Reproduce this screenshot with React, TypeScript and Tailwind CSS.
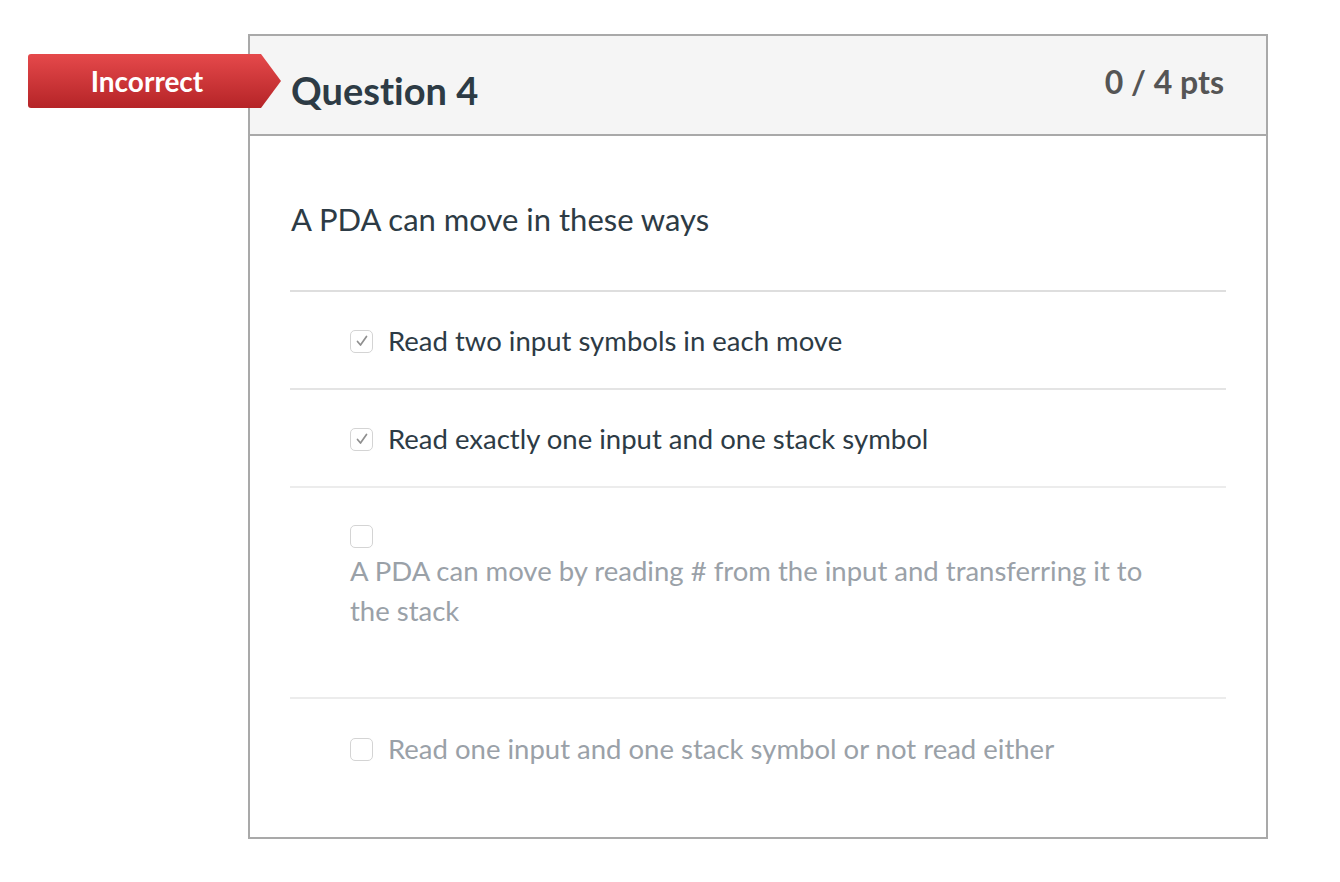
import React from "react";

function Check({ checked }: { checked: boolean }) {
  return (
    <span className="flex h-[23px] w-[23px] shrink-0 items-center justify-center rounded-[5px] border border-[#d4d4d4] bg-white">
      {checked && (
        <svg width="14" height="14" viewBox="0 0 14 14" fill="none">
          <path d="M2.5 7.5 L5.5 11 L11.5 2.5" stroke="#8f8f8f" strokeWidth="1.7" strokeLinecap="round" strokeLinejoin="round" />
        </svg>
      )}
    </span>
  );
}

export default function App() {
  const font = { fontFamily: "Lato, 'Open Sans', sans-serif" };
  return (
    <div className="relative min-h-[882px] w-[1340px] bg-white pl-[248px] pt-[34px] [font-variant-ligatures:none]" style={font}>
      {/* Incorrect banner */}
      <div className="absolute left-[28px] top-[54px] h-[54px] w-[253px]">
        <svg className="absolute inset-0" width="253" height="54" viewBox="0 0 253 54">
          <defs>
            <linearGradient id="rg" x1="0" y1="0" x2="0" y2="1">
              <stop offset="0" stopColor="#e5494b" />
              <stop offset="1" stopColor="#b52427" />
            </linearGradient>
          </defs>
          <path d="M3 0 H233 L253 27 L233 54 H3 Q0 54 0 51 V3 Q0 0 3 0 Z" fill="url(#rg)" />
        </svg>
        <div className="relative flex h-full w-[238px] items-center justify-center pb-[1px] text-[28px] font-bold leading-none text-white">
          Incorrect
        </div>
      </div>

      <div className="w-[1020px] border-2 border-[#a9a9a9]">
        <div className="flex h-[100px] items-start justify-between border-b-2 border-[#a9a9a9] bg-[#f5f5f5] pl-[41px] pr-[42px]">
          <div className="pt-[32px] text-[38px] font-bold leading-[44px] text-[#2d3b45]">Question 4</div>
          <div className="pt-[26px] text-[32px] font-bold leading-[40px] text-[#555555]">0 / 4 pts</div>
        </div>
        <div className="px-[40px] pb-[68px]">
          <div className="pb-[51px] pl-[1px] pt-[63px] text-[31px] leading-[40px] text-[#2d3b45]">
            A PDA can move in these ways
          </div>
          <div className="border-t-2 border-[#dedede]">
            <div className="flex items-center gap-[15px] pb-[27px] pl-[60px] pt-[29px] text-[27.5px] leading-[40px] text-[#2d3b45]">
              <Check checked />
              <span>Read two input symbols in each move</span>
            </div>
          </div>
          <div className="border-t-2 border-[#e4e4e4]">
            <div className="flex items-center gap-[15px] pb-[27px] pl-[60px] pt-[29px] text-[27.5px] leading-[40px] text-[#2d3b45]">
              <Check checked />
              <span>Read exactly one input and one stack symbol</span>
            </div>
          </div>
          <div className="border-t-2 border-[#ececec]">
            <div className="flex flex-col pb-[66px] pl-[60px] pr-[66px] pt-[37px] text-[27.5px] leading-[40px] text-[#9aa1a8]">
              <Check checked={false} />
              <span className="mt-[3px]">
                A PDA can move by reading # from the input and transferring it to the stack
              </span>
            </div>
          </div>
          <div className="border-t-2 border-[#ececec]">
            <div className="flex items-center gap-[15px] pl-[60px] pt-[30px] text-[27.5px] leading-[40px] text-[#9aa1a8]">
              <Check checked={false} />
              <span>Read one input and one stack symbol or not read either</span>
            </div>
          </div>
        </div>
      </div>
    </div>
  );
}
